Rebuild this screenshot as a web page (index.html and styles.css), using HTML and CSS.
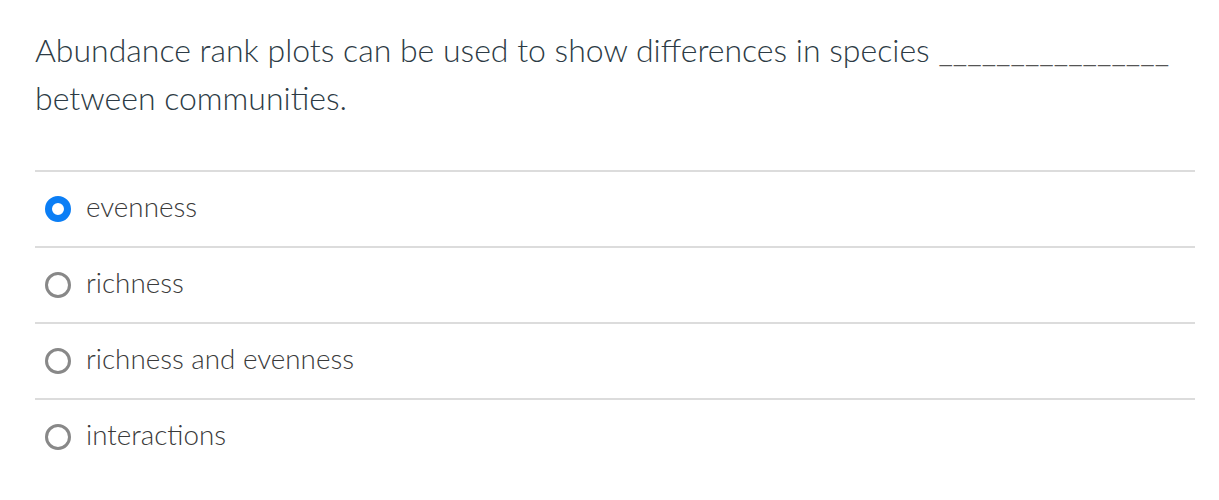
FILE: index.html
```html
<!DOCTYPE html>
<html lang="en">
<head>
    <meta charset="UTF-8">
    <meta name="viewport" content="width=device-width, initial-scale=1.0">
    <title>Quiz Question</title>
    <link rel="stylesheet" href="styles.css">
</head>
<body>
    <div class="question">
        <p class="question-text">Abundance rank plots can be used to show differences in species <span class="blank">________________</span> between communities.</p>
        <div class="answers">
            <label class="answer">
                <span class="radio checked"></span>
                <span class="answer-text">evenness</span>
            </label>
            <label class="answer">
                <span class="radio"></span>
                <span class="answer-text">richness</span>
            </label>
            <label class="answer">
                <span class="radio"></span>
                <span class="answer-text">richness and evenness</span>
            </label>
            <label class="answer">
                <span class="radio"></span>
                <span class="answer-text">interactions</span>
            </label>
        </div>
    </div>
</body>
</html>
```

FILE: styles.css
```css
body {
    font-family: Lato, "Noto Sans", sans-serif;
    margin: 0;
    padding: 0;
    background-color: #fff;
    color: #2d3b45;
}
.question {
    width: 1160px;
    padding: 26px 0 0 35px;
}
.question-text {
    margin: 0;
    font-size: 32px;
    font-weight: 300;
    line-height: 48px;
    width: 1160px;
}
.blank {
    color: #555;
}
.answers {
    margin-top: 48px;
}
.answer {
    display: flex;
    align-items: center;
    height: 74px;
    border-top: 2px solid #dcdcdc;
}
.radio {
    width: 20px;
    height: 20px;
    border: 3px solid #888;
    border-radius: 50%;
    margin-left: 10px;
    margin-right: 15px;
}
.radio.checked {
    border: 7px solid #0b7ef5;
    width: 12px;
    height: 12px;
}
.answer-text {
    font-size: 27.8px;
    font-weight: 300;
    color: #3a3a3a;
    margin-bottom: 5px;
}
```
